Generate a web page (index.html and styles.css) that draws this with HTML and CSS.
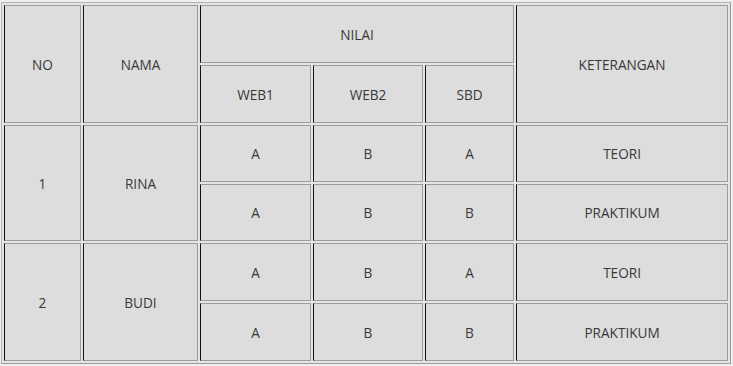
FILE: index.html
```html
<!DOCTYPE html>
<html>
<head>
<meta charset="utf-8">
<link rel="stylesheet" href="styles.css">
</head>
<body>
<table class="grid">
  <colgroup>
    <col class="c-no"><col class="c-nama"><col class="c-web1"><col class="c-web2"><col class="c-sbd"><col class="c-ket">
  </colgroup>
  <tr class="r58">
    <td rowspan="2">NO</td>
    <td rowspan="2">NAMA</td>
    <td colspan="3">NILAI</td>
    <td rowspan="2">KETERANGAN</td>
  </tr>
  <tr class="r58">
    <td>WEB1</td>
    <td>WEB2</td>
    <td>SBD</td>
  </tr>
  <tr class="r57">
    <td rowspan="2">1</td>
    <td rowspan="2">RINA</td>
    <td>A</td><td>B</td><td>A</td>
    <td>TEORI</td>
  </tr>
  <tr class="r57">
    <td>A</td><td>B</td><td>B</td>
    <td>PRAKTIKUM</td>
  </tr>
  <tr class="r58">
    <td rowspan="2">2</td>
    <td rowspan="2">BUDI</td>
    <td>A</td><td>B</td><td>A</td>
    <td>TEORI</td>
  </tr>
  <tr class="r58">
    <td>A</td><td>B</td><td>B</td>
    <td>PRAKTIKUM</td>
  </tr>
</table>
</body>
</html>
```
FILE: styles.css
```css
html, body {
  margin: 0;
  padding: 0;
  background: #efefef;
}
body {
  padding: 2px 0 0 1px;
  font-family: "Open Sans", "DejaVu Sans", sans-serif;
  font-size: 13.6px;
  color: #383838;
}
.grid {
  table-layout: fixed;
  width: 730px;
  border-collapse: separate;
  border-spacing: 2px;
  border: 1px solid;
  border-color: #b4b4b4 #9a9a9a #9a9a9a #b4b4b4;
  background: #e4e4e4;
}
.grid td {
  padding: 0;
  text-align: center;
  vertical-align: middle;
  background: #dddddd;
  border: 1px solid #9c9c9c;
  border-left-color: #111;
  box-sizing: border-box;
}
.c-no { width: 77px; }
.c-nama { width: 115px; }
.c-web1 { width: 111px; }
.c-web2 { width: 110px; }
.c-sbd { width: 89px; }
.c-ket { width: 212px; }
.r58 { height: 58px; }
.r57 { height: 57px; }
```
